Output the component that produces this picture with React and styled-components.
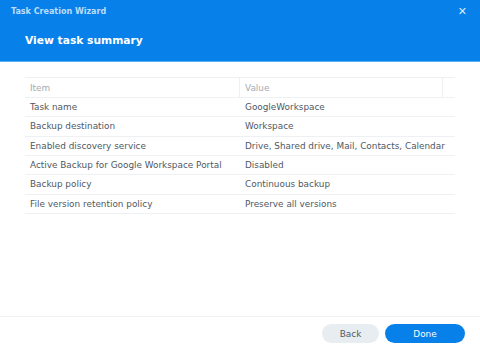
import React from "react";
import styled, { createGlobalStyle } from "styled-components";

const GlobalStyle = createGlobalStyle`
  html, body {
    margin: 0;
    padding: 0;
    background: #fff;
  }
  body {
    font-family: "DejaVu Sans", Verdana, sans-serif;
  }
  * {
    box-sizing: border-box;
  }
`;

const Window = styled.div`
  width: 480px;
  height: 347px;
  display: flex;
  flex-direction: column;
  background: #fff;
  overflow: hidden;
`;

const Header = styled.div`
  height: 62px;
  flex-shrink: 0;
  background: #0880ea;
  border-bottom: 1px solid #5aaef5;
  display: flex;
  flex-direction: column;
`;

const TitleBar = styled.div`
  height: 22px;
  display: flex;
  align-items: center;
  justify-content: space-between;
  padding: 0 13px 0 11px;
`;

const WindowTitle = styled.span`
  font-size: 8px;
  font-weight: bold;
  color: #bcdcf8;
`;

const Close = styled.span`
  font-size: 11px;
  font-weight: bold;
  color: #d8ebfc;
  line-height: 1;
`;

const StepTitle = styled.h1`
  margin: 12px 0 0 25px;
  font-size: 10.7px;
  font-weight: bold;
  color: #fff;
`;

const Body = styled.div`
  flex: 1;
  padding: 15px 25px 0 25px;
`;

const Table = styled.div`
  width: 430px;
  border-top: 1px solid #eef1f4;
`;

const Row = styled.div`
  display: grid;
  grid-template-columns: ${(p) => (p.$head ? "215px 203px 12px" : "215px 215px")};
  height: ${(p) => (p.$head ? "20px" : "19.33px")};
  border-bottom: 1px solid #eef1f4;
  align-items: center;
`;

const Cell = styled.div`
  height: 100%;
  display: flex;
  align-items: center;
  padding-left: 5px;
  font-size: 8.9px;
  color: ${(p) => (p.$head ? "#a4abb3" : "#4f5862")};
  border-right: ${(p) => (p.$divider ? "1px solid #eef1f4" : "none")};
  white-space: nowrap;
`;

const Footer = styled.div`
  height: 31px;
  flex-shrink: 0;
  border-top: 1px solid #eef1f4;
  display: flex;
  justify-content: flex-end;
  align-items: flex-start;
  gap: 6px;
  padding: 7px 15px 0 0;
`;

const Button = styled.button`
  height: 19px;
  width: ${(p) => p.$width}px;
  border: none;
  border-radius: 10px;
  font-family: "DejaVu Sans", Verdana, sans-serif;
  font-size: 8.9px;
  padding: 0;
  background: ${(p) => (p.$primary ? "#0880ea" : "#e8edf2")};
  color: ${(p) => (p.$primary ? "#fff" : "#505a64")};
`;

const rows = [
  ["Task name", "GoogleWorkspace"],
  ["Backup destination", "Workspace"],
  ["Enabled discovery service", "Drive, Shared drive, Mail, Contacts, Calendar"],
  ["Active Backup for Google Workspace Portal", "Disabled"],
  ["Backup policy", "Continuous backup"],
  ["File version retention policy", "Preserve all versions"],
];

const App = () => {
  return (
    <>
      <GlobalStyle />
      <Window>
        <Header>
          <TitleBar>
            <WindowTitle>Task Creation Wizard</WindowTitle>
            <Close>✕</Close>
          </TitleBar>
          <StepTitle>View task summary</StepTitle>
        </Header>
        <Body>
          <Table>
            <Row $head>
              <Cell $head $divider>Item</Cell>
              <Cell $head $divider>Value</Cell>
              <Cell $head />
            </Row>
            {rows.map(([item, value]) => (
              <Row key={item}>
                <Cell>{item}</Cell>
                <Cell>{value}</Cell>
              </Row>
            ))}
          </Table>
        </Body>
        <Footer>
          <Button $width={57}>Back</Button>
          <Button $primary $width={80}>Done</Button>
        </Footer>
      </Window>
    </>
  );
};

export default App;
